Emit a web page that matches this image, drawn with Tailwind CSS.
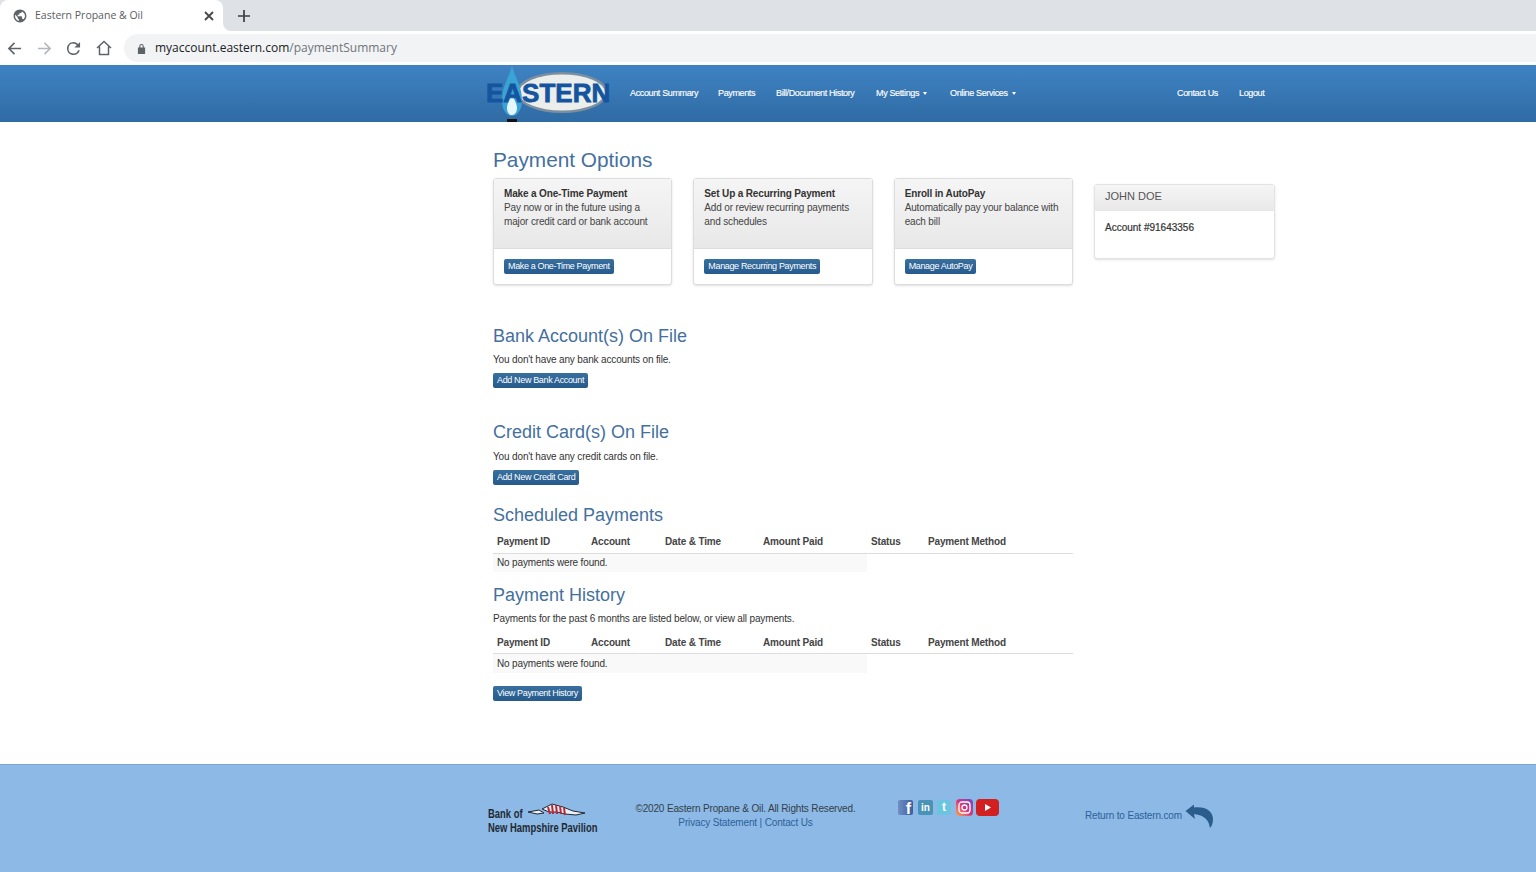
<!DOCTYPE html>
<html lang="en">
<head>
    <meta charset="UTF-8">
    <meta name="viewport" content="width=device-width, initial-scale=1.0">
    <title>Eastern Propane &amp; Oil</title>
    <script src="https://cdn.jsdelivr.net/npm/@tailwindcss/browser@4"></script>
</head>
<body class="bg-white h-[872px] overflow-hidden flex flex-col font-['Liberation_Sans',Arial,sans-serif] text-[#333]">

    <!-- Browser tab strip -->
    <div class="h-[31px] bg-[#dee1e6] flex items-stretch shrink-0">
        <div class="w-[223px] bg-white rounded-t-[8px] flex items-center pl-[13px] pr-[9px]">
            <svg class="w-[14px] h-[14px] mr-[8px]" viewBox="0 0 24 24" fill="#5f6368"><path d="M12 1C5.900 1 1 5.900 1 12s4.900 11 11 11 11-4.900 11-11S18.100 1 12 1zM3.500 12c0-.8.100-1.500.300-2.200L8 14v1.500c0 1.100.9 2 2 2v2.900C6.300 19.900 3.500 16.300 3.500 12zm14.700 5.700c-.3-.8-1-1.200-1.800-1.200h-1v-3c0-.5-.5-1-1-1H8v-2.500h2c.5 0 1-.5 1-1V7h2c1.100 0 2-.9 2-2v-.6c3.100 1.200 5.500 4.200 5.500 7.600 0 2.200-1.100 4.200-2.300 5.700z"/></svg>
            <span class="text-[10.500px] text-[#5a5d61] font-['Open_Sans',sans-serif] whitespace-nowrap">Eastern Propane &amp; Oil</span>
            <svg class="w-[10px] h-[10px] ml-auto" viewBox="0 0 10 10" stroke="#44474b" stroke-width="1.800"><path d="M1 1l8 8M9 1l-8 8"/></svg>
        </div>
        <div class="w-[8px] bg-white"><div class="h-full bg-[#dee1e6] rounded-bl-[8px]"></div></div>
        <div class="flex items-center pl-[7px]">
            <svg class="w-[12px] h-[12px]" viewBox="0 0 12 12" stroke="#3c4043" stroke-width="1.700"><path d="M6 0v12M0 6h12"/></svg>
        </div>
    </div>

    <!-- Address bar -->
    <div class="h-[34px] bg-white flex items-center shrink-0">
        <div class="w-[124px] flex items-center pl-[7px] gap-[14.500px] shrink-0">
            <svg class="w-[15px] h-[15px]" viewBox="0 0 16 16" fill="none" stroke="#5f6368" stroke-width="1.700"><path d="M15 8H2M8 2L2 8l6 6"/></svg>
            <svg class="w-[15px] h-[15px]" viewBox="0 0 16 16" fill="none" stroke="#b4b7bb" stroke-width="1.700"><path d="M1 8h13M8 2l6 6-6 6"/></svg>
            <svg class="w-[15px] h-[15px]" viewBox="0 0 24 24" fill="#5f6368"><path d="M19.400 4.600A10.500 10.500 0 0 0 12 1.500C6.200 1.500 1.500 6.200 1.500 12S6.200 22.500 12 22.500c4.900 0 9-3.300 10.100-7.900h-2.900a7.800 7.800 0 1 1-7.200-10.400c2.100 0 4 .9 5.400 2.300L13.500 10.500h9V1.500l-3.100 3.100z"/></svg>
            <svg class="w-[16px] h-[16px]" viewBox="0 0 16 16" fill="none" stroke="#5f6368" stroke-width="1.500"><path d="M1 8l7-6.500L15 8M3.500 6.500V14.500h9V6.500"/></svg>
        </div>
        <div class="flex-1 h-[28px] bg-[#f1f3f4] rounded-l-full flex items-center pl-[13px]">
            <svg class="w-[9px] h-[11px] mr-[9px]" viewBox="0 0 10 12" fill="#5f6368"><path d="M2.500 5V3.500a2.500 2.500 0 0 1 5 0V5H9v7H1V5h1.500zm1.200 0h2.600V3.500a1.300 1.300 0 0 0-2.600 0V5z"/></svg>
            <span class="text-[12px] font-['Open_Sans',sans-serif] text-[#202124] whitespace-nowrap">myaccount.eastern.com<span class="text-[#70757a]">/paymentSummary</span></span>
        </div>
    </div>

    <!-- Site header -->
    <header class="h-[57px] bg-gradient-to-b from-[#3f83c3] to-[#2f6ba4] shrink-0 flex items-center pl-[486px] text-white text-[9px] tracking-[-0.36px]">
        <div class="relative w-[124px] h-[57px] shrink-0">
            <svg class="absolute left-0 top-0" width="124" height="57" viewBox="0 0 124 57">
                <ellipse cx="76" cy="27.500" rx="46" ry="20.500" fill="#7d8f9f"/>
                <ellipse cx="76" cy="27.500" rx="43" ry="18" fill="#eceeec"/>
                <path d="M26 0C23 14 16 20 16 36c0 9 5 15 10 15s10-6 10-15C36 20 29 14 26 0z" fill="#3aa3d6"/>
                <path d="M26 30c-3 6-5 9-5 13 0 4 2 7 5 7s5-3 5-7c0-4-2-7-5-13z" fill="#e6f7fb"/>
                <rect x="21" y="54" width="10" height="3" fill="#111"/>
            </svg>
            <span class="absolute left-0 top-[15px] text-[26px] leading-[26px] font-bold tracking-normal text-[#15559f] [-webkit-text-stroke:0.8px_#15559f] whitespace-nowrap">EASTERN</span>
        </div>
        <nav class="flex items-center pl-[20px] [-webkit-text-stroke:0.15px_#fff]">
            <a class="w-[88px]">Account Summary</a>
            <a class="w-[58px]">Payments</a>
            <a class="w-[100px]">Bill/Document History</a>
            <a class="w-[74px] flex items-center gap-[4px]">My Settings <span class="w-0 h-0 border-x-[2.500px] border-x-transparent border-t-[3px] border-t-white"></span></a>
            <a class="w-[227px] flex items-center gap-[4px]">Online Services <span class="w-0 h-0 border-x-[2.500px] border-x-transparent border-t-[3px] border-t-white"></span></a>
            <a class="w-[62px]">Contact Us</a>
            <a>Logout</a>
        </nav>
    </header>

    <!-- Page content -->
    <main class="flex-1 pl-[493px] flex items-start gap-[21px]">
        <div class="w-[580px] shrink-0">
            <h3 class="mt-[22px] h-[31px] leading-[31px] text-[20.800px] text-[#44709e]">Payment Options</h3>
            <div class="mt-[3px] grid grid-cols-3 gap-x-[21px]">
                <div class="h-[107px] flex flex-col bg-white border border-[#ddd] rounded-[3px] shadow-sm">
                    <div class="h-[70px] px-[10px] pt-[8px] bg-gradient-to-b from-[#f5f5f5] to-[#e8e8e8] border-b border-[#ddd] text-[10px] tracking-[-0.15px] leading-[14px] text-[#444]">
                        <div class="font-bold text-[#333]">Make a One-Time Payment</div>
                        Pay now or in the future using a major credit card or bank account
                    </div>
                    <div class="px-[10px] pt-[10px]"><a class="block w-fit h-[15px] leading-[14px] px-[4px] bg-gradient-to-b from-[#38709f] to-[#265a8d] rounded-[2px] text-[9px] tracking-[-0.35px] text-white whitespace-nowrap">Make a One-Time Payment</a></div>
                </div>
                <div class="h-[107px] flex flex-col bg-white border border-[#ddd] rounded-[3px] shadow-sm">
                    <div class="h-[70px] px-[10px] pt-[8px] bg-gradient-to-b from-[#f5f5f5] to-[#e8e8e8] border-b border-[#ddd] text-[10px] tracking-[-0.15px] leading-[14px] text-[#444]">
                        <div class="font-bold text-[#333]">Set Up a Recurring Payment</div>
                        Add or review recurring payments and schedules
                    </div>
                    <div class="px-[10px] pt-[10px]"><a class="block w-fit h-[15px] leading-[14px] px-[4px] bg-gradient-to-b from-[#38709f] to-[#265a8d] rounded-[2px] text-[9px] tracking-[-0.35px] text-white whitespace-nowrap">Manage Recurring Payments</a></div>
                </div>
                <div class="h-[107px] flex flex-col bg-white border border-[#ddd] rounded-[3px] shadow-sm">
                    <div class="h-[70px] px-[10px] pt-[8px] bg-gradient-to-b from-[#f5f5f5] to-[#e8e8e8] border-b border-[#ddd] text-[10px] tracking-[-0.15px] leading-[14px] text-[#444]">
                        <div class="font-bold text-[#333]">Enroll in AutoPay</div>
                        Automatically pay your balance with each bill
                    </div>
                    <div class="px-[10px] pt-[10px]"><a class="block w-fit h-[15px] leading-[14px] px-[4px] bg-gradient-to-b from-[#38709f] to-[#265a8d] rounded-[2px] text-[9px] tracking-[-0.35px] text-white whitespace-nowrap">Manage AutoPay</a></div>
                </div>
            </div>

            <h3 class="mt-[35px] h-[32px] leading-[32px] text-[18px] text-[#44709e]">Bank Account(s) On File</h3>
            <p class="mt-[1px] h-[14px] leading-[14px] text-[10px] tracking-[-0.15px] text-[#333]">You don't have any bank accounts on file.</p>
            <a class="mt-[6px] block w-fit h-[15px] leading-[14px] px-[4px] bg-gradient-to-b from-[#38709f] to-[#265a8d] rounded-[2px] text-[9px] tracking-[-0.35px] text-white whitespace-nowrap">Add New Bank Account</a>

            <h3 class="mt-[28px] h-[32px] leading-[32px] text-[18px] text-[#44709e]">Credit Card(s) On File</h3>
            <p class="mt-[2px] h-[14px] leading-[14px] text-[10px] tracking-[-0.15px] text-[#333]">You don't have any credit cards on file.</p>
            <a class="mt-[6px] block w-fit h-[15px] leading-[14px] px-[4px] bg-gradient-to-b from-[#38709f] to-[#265a8d] rounded-[2px] text-[9px] tracking-[-0.35px] text-white whitespace-nowrap">Add New Credit Card</a>

            <h3 class="mt-[14px] h-[32px] leading-[32px] text-[18px] text-[#44709e]">Scheduled Payments</h3>
            <table class="w-full table-fixed text-[10px] tracking-[-0.15px] text-[#333]">
                <colgroup><col class="w-[94px]"><col class="w-[74px]"><col class="w-[98px]"><col class="w-[108px]"><col class="w-[57px]"><col></colgroup>
                <thead>
                    <tr class="h-[22px] border-b border-[#ddd] text-left">
                        <th class="px-[4px] font-bold text-[#444]">Payment ID</th>
                        <th class="px-[4px] font-bold text-[#444]">Account</th>
                        <th class="px-[4px] font-bold text-[#444]">Date &amp; Time</th>
                        <th class="px-[4px] font-bold text-[#444]">Amount Paid</th>
                        <th class="px-[4px] font-bold text-[#444]">Status</th>
                        <th class="px-[4px] font-bold text-[#444]">Payment Method</th>
                    </tr>
                </thead>
                <tbody>
                    <tr class="h-[19px]">
                        <td colspan="4" class="px-[4px] bg-[#f9f9f9]">No payments were found.</td>
                        <td colspan="2"></td>
                    </tr>
                </tbody>
            </table>

            <h3 class="mt-[7px] h-[32px] leading-[32px] text-[18px] text-[#44709e]">Payment History</h3>
            <p class="mt-[1px] h-[14px] leading-[14px] text-[10px] tracking-[-0.15px] text-[#333]">Payments for the past 6 months are listed below, or view all payments.</p>
            <table class="mt-[6px] w-full table-fixed text-[10px] tracking-[-0.15px] text-[#333]">
                <colgroup><col class="w-[94px]"><col class="w-[74px]"><col class="w-[98px]"><col class="w-[108px]"><col class="w-[57px]"><col></colgroup>
                <thead>
                    <tr class="h-[21px] border-b border-[#ddd] text-left">
                        <th class="px-[4px] font-bold text-[#444]">Payment ID</th>
                        <th class="px-[4px] font-bold text-[#444]">Account</th>
                        <th class="px-[4px] font-bold text-[#444]">Date &amp; Time</th>
                        <th class="px-[4px] font-bold text-[#444]">Amount Paid</th>
                        <th class="px-[4px] font-bold text-[#444]">Status</th>
                        <th class="px-[4px] font-bold text-[#444]">Payment Method</th>
                    </tr>
                </thead>
                <tbody>
                    <tr class="h-[20px]">
                        <td colspan="4" class="px-[4px] bg-[#f9f9f9]">No payments were found.</td>
                        <td colspan="2"></td>
                    </tr>
                </tbody>
            </table>
            <a class="mt-[13px] block w-fit h-[15px] leading-[14px] px-[4px] bg-gradient-to-b from-[#38709f] to-[#265a8d] rounded-[2px] text-[9px] tracking-[-0.35px] text-white whitespace-nowrap">View Payment History</a>
        </div>

        <!-- Account panel -->
        <aside class="mt-[62px] w-[181px] h-[75px] bg-white border border-[#e3e3e3] rounded-[3px] shadow-sm">
            <div class="h-[26px] leading-[23px] px-[10px] bg-gradient-to-b from-[#f5f5f5] to-[#e8e8e8] text-[11px] text-[#555]">JOHN DOE</div>
            <div class="px-[10px] pt-[10px] text-[10px] leading-[14px] text-[#333] [-webkit-text-stroke:0.2px_#333]">Account #91643356</div>
        </aside>
    </main>

    <!-- Footer -->
    <footer class="h-[108px] shrink-0 bg-[#8cb9e5] border-t border-[#7ba6cf] pl-[488px] flex items-start">
        <div class="w-[147px] mt-[41px] font-bold text-[#1f2933] text-[13px] leading-[14px]">
            <div class="flex items-center h-[15px]">
                <span class="w-[36px] whitespace-nowrap origin-left scale-x-[0.725]">Bank of</span>
                <svg class="ml-[3px] mt-[-6px]" width="60" height="16" viewBox="0 0 60 16">
                    <path d="M1 9l11-2 5 3-7 1zM15 6L25 1l11 3 10 4 12 2-9 2-11-1-8-2-8 0z" fill="#eef1f4" stroke="#1f2933" stroke-width="1"/>
                    <path d="M21 4l2 7M25 2l1 9M29 2l1 9M33 3l1 8M37 5l1 7" stroke="#b8283a" stroke-width="2"/>
                </svg>
            </div>
            <div class="whitespace-nowrap origin-left scale-x-[0.725]">New Hampshire Pavilion</div>
        </div>
        <div class="w-[221px] mt-[37px] text-center text-[10px] tracking-[-0.15px] leading-[14px] text-[#333f4a] whitespace-nowrap">
            <div>©2020 Eastern Propane &amp; Oil. All Rights Reserved.</div>
            <div class="text-[#2d6199]">Privacy Statement | Contact Us</div>
        </div>
        <div class="ml-[42px] mt-[34px] flex items-start w-[187px]">
            <span class="mt-[1px] w-[15px] h-[15px] rounded-[2px] bg-gradient-to-r from-[#6f8ec4] to-[#3d5f9f] text-white text-[16px] font-bold leading-[17px] text-right pr-[2px]">f</span>
            <span class="mt-[1px] ml-[5px] w-[15px] h-[15px] rounded-[2px] bg-[#4a93b8] text-white text-[10px] font-bold leading-[15px] text-center">in</span>
            <span class="mt-[1px] ml-[4px] w-[14px] h-[15px] rounded-[2px] bg-[#6cc5e0] text-white text-[12px] font-bold leading-[15px] text-center">t</span>
            <span class="ml-[5px] w-[17px] h-[17px] rounded-[4px] bg-gradient-to-tr from-[#f5a33c] via-[#d6307f] to-[#6a3fc0] flex items-center justify-center">
                <svg class="w-[13px] h-[13px]" viewBox="0 0 13 13" fill="none" stroke="#fff" stroke-width="1.300"><rect x="1" y="1" width="11" height="11" rx="3"/><circle cx="6.500" cy="6.500" r="2.500"/></svg>
            </span>
            <span class="ml-[3px] w-[23px] h-[17px] rounded-[4px] bg-[#d1201f] flex items-center justify-center">
                <svg class="w-[7px] h-[7px]" viewBox="0 0 7 7" fill="#fff"><path d="M1 0l6 3.500L1 7z"/></svg>
            </span>
        </div>
        <div class="mt-[39px] flex items-start text-[10px] tracking-[-0.15px] leading-[22px] text-[#2d6199]">
            <span class="whitespace-nowrap mt-[1px]">Return to Eastern.com</span>
            <svg class="ml-[3px]" width="28" height="25" viewBox="0 0 28 25"><path d="M.5 7L9 .5v3C20 2 28 7 28 15c0 4-1 7-3 9-1-5-2-12-16-14l1 5z" fill="#2a5d8b"/></svg>
        </div>
    </footer>

</body>
</html>
